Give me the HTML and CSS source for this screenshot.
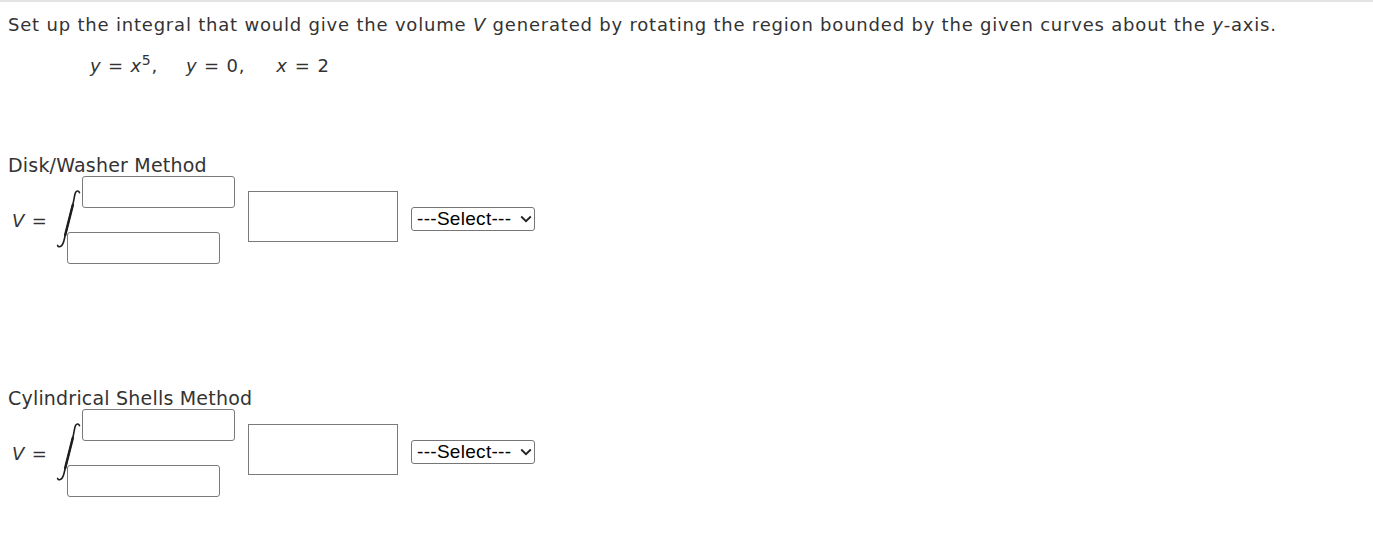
FILE: index.html
```html
<!DOCTYPE html>
<html>
<head>
<meta charset="utf-8">
<link rel="stylesheet" href="styles.css">
</head>
<body>
<div class="page">
  <p class="question">Set up the integral that would give the volume <i>V</i> generated by rotating the region bounded by the given curves about the <i>y</i>-axis.</p>
  <div class="equation">
    <span class="eq"><i>y</i> = <i>x</i><sup>5</sup>,</span>
    <span class="eq"><i>y</i> = 0,</span>
    <span class="eq last"><i>x</i> = 2</span>
  </div>

  <section class="method disk">
    <h2 class="method-title">Disk/Washer Method</h2>
    <div class="int-row">
      <span class="v-label"><i>V</i> =</span>
      <svg class="int-sign" width="26" height="62" viewBox="0 0 26 62" aria-label="integral"><path d="M22.5 4.6 C21.6 2.4 19.2 2.4 18.2 5.2 C17.6 7.2 17.2 10 16.4 14 L7.6 50 C6.6 55 5.2 58 3.2 58.6 C1.8 59 0.9 58.3 0.6 57.4" fill="none" stroke="#1e1e1e" stroke-width="1.6" stroke-linecap="round"/><path d="M15.8 17 L8.2 47" stroke="#1e1e1e" stroke-width="2.5" stroke-linecap="round"/></svg>
      <div class="limits">
        <input class="box limit upper" type="text">
        <input class="box limit lower" type="text">
      </div>
      <input class="box integrand" type="text">
      <span class="sel-wrap">
        <select class="sel"><option>---Select---</option><option>dx</option><option>dy</option></select>
        <svg class="chev" width="12" height="8" viewBox="0 0 12 8"><path d="M1.2 1.5 L6 6.2 L10.8 1.5" fill="none" stroke="#222" stroke-width="1.8"/></svg>
      </span>
    </div>
  </section>

  <section class="method shells">
    <h2 class="method-title">Cylindrical Shells Method</h2>
    <div class="int-row">
      <span class="v-label"><i>V</i> =</span>
      <svg class="int-sign" width="26" height="62" viewBox="0 0 26 62" aria-label="integral"><path d="M22.5 4.6 C21.6 2.4 19.2 2.4 18.2 5.2 C17.6 7.2 17.2 10 16.4 14 L7.6 50 C6.6 55 5.2 58 3.2 58.6 C1.8 59 0.9 58.3 0.6 57.4" fill="none" stroke="#1e1e1e" stroke-width="1.6" stroke-linecap="round"/><path d="M15.8 17 L8.2 47" stroke="#1e1e1e" stroke-width="2.5" stroke-linecap="round"/></svg>
      <div class="limits">
        <input class="box limit upper" type="text">
        <input class="box limit lower" type="text">
      </div>
      <input class="box integrand" type="text">
      <span class="sel-wrap">
        <select class="sel"><option>---Select---</option><option>dx</option><option>dy</option></select>
        <svg class="chev" width="12" height="8" viewBox="0 0 12 8"><path d="M1.2 1.5 L6 6.2 L10.8 1.5" fill="none" stroke="#222" stroke-width="1.8"/></svg>
      </span>
    </div>
  </section>
</div>
</body>
</html>
```
FILE: styles.css
```css
html, body {
  margin: 0;
  padding: 0;
  background: #fff;
}
.page {
  border-top: 2px solid #e3e3e3;
  padding: 0 8px;
  font-family: "DejaVu Sans", Verdana, sans-serif;
  color: #333;
}
.question {
  margin: 0;
  padding-top: 11px;
  font-size: 18px;
  line-height: 24px;
  letter-spacing: 0.8px;
}
.equation {
  margin-top: 17px;
  margin-left: 82px;
  font-size: 18px;
  line-height: 24px;
  letter-spacing: 0.8px;
  display: flex;
  gap: 28px;
}
.equation .last {
  margin-left: 3px;
  letter-spacing: 1px;
}
.equation sup {
  font-size: 14px;
  line-height: 0;
  vertical-align: 7px;
}
.method-title {
  margin: 0;
  padding-top: 1px;
  font-weight: normal;
  font-size: 19px;
  line-height: 22px;
  letter-spacing: 0.2px;
}
.disk { margin-top: 75px; }
.shells { margin-top: 122px; }
.int-row {
  display: flex;
  align-items: center;
}
.v-label {
  margin-left: 4px;
  font-size: 18px;
  letter-spacing: 0.9px;
  width: 45px;
  white-space: nowrap;
}
.int-sign {
  align-self: flex-start;
  margin-top: 12px;
  margin-right: -16px;
  overflow: visible;
  position: relative;
  z-index: 1;
}
.limits {
  display: flex;
  flex-direction: column;
  gap: 24px;
  width: 168px;
}
.box {
  box-sizing: border-box;
  border: 1px solid #7a7a7a;
  background: #fff;
  margin: 0;
  padding: 0;
}
.limit {
  width: 153px;
  height: 32px;
  border-radius: 3px;
}
.upper { margin-left: 15px; }
.integrand {
  margin-left: 13px;
  width: 150px;
  height: 51px;
  border-radius: 0;
  align-self: flex-start;
  margin-top: 15px;
}
.sel-wrap {
  position: relative;
  margin-left: 13px;
  margin-top: -2px;
  display: inline-block;
  height: 24px;
}
.sel {
  -webkit-appearance: none;
  appearance: none;
  box-sizing: border-box;
  width: 124px;
  height: 24px;
  font-family: "Liberation Sans", Arial, sans-serif;
  font-size: 19px;
  letter-spacing: 0.3px;
  color: #000;
  border: 1px solid #767676;
  border-radius: 3px;
  background: #fff;
  padding: 0 0 0 5px;
  margin: 0;
  line-height: 22px;
}
.chev {
  position: absolute;
  right: 3px;
  top: 8px;
  pointer-events: none;
}
```
